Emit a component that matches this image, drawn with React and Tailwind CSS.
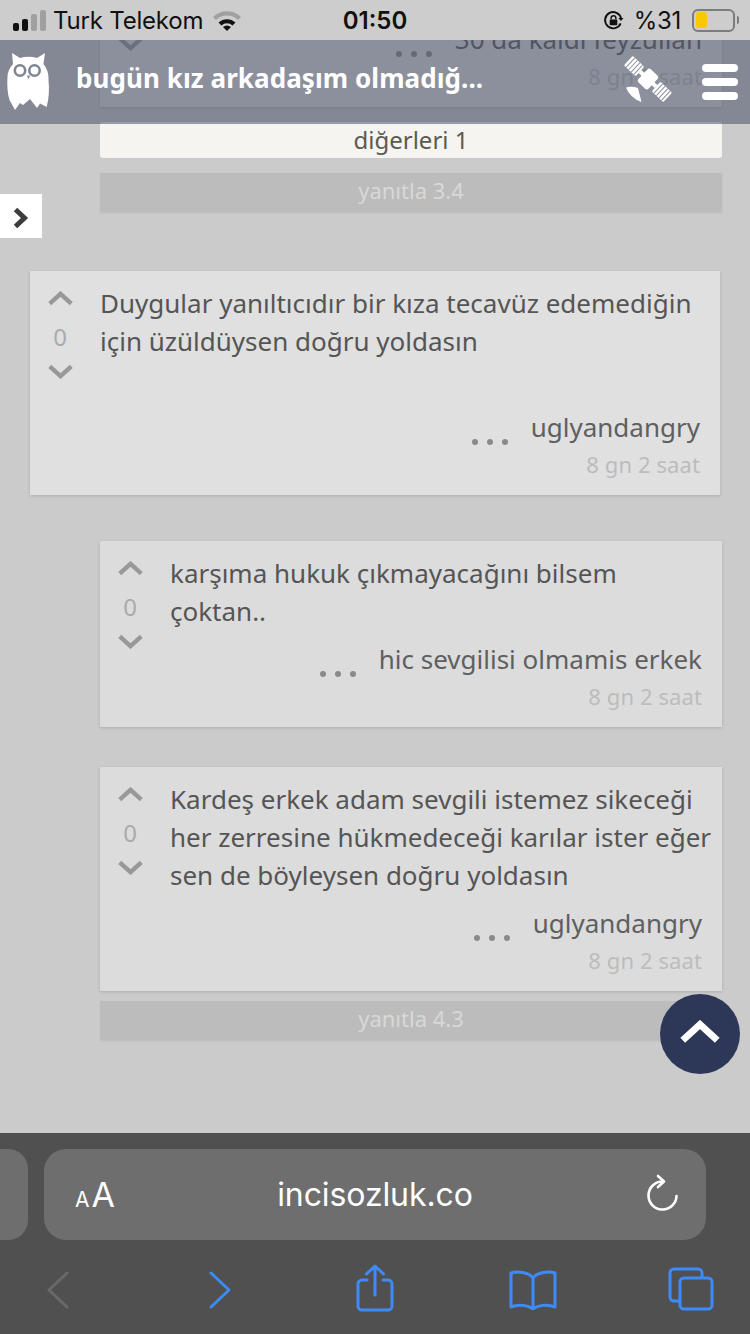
import React from 'react';

const sans = "font-['Noto_Sans','Open_Sans',sans-serif]";

const Chevron = ({ down, className }) => (
  <svg viewBox="0 0 28 16" className={className} fill="none" stroke="currentColor" strokeWidth="4.6">
    <path d={down ? 'M2.5 2.5 14 13 25.5 2.5' : 'M2.5 13.5 14 3 25.5 13.5'} />
  </svg>
);

const Votes = () => (
  <div className="flex w-[60px] shrink-0 flex-col items-center pt-[20px] text-[#989898]">
    <Chevron className="h-[15px] w-[27px]" />
    <span className="mt-[14px] h-[34px] text-[24px] leading-[34px] text-[#ababab]">0</span>
    <Chevron down className="mt-[10px] h-[15px] w-[27px]" />
  </div>
);

const Dots = () => (
  <div className="mr-[23px] mt-[31px] flex gap-[9px]">
    <span className="h-[6px] w-[6px] rounded-full bg-[#8a8a8a]" />
    <span className="h-[6px] w-[6px] rounded-full bg-[#8a8a8a]" />
    <span className="h-[6px] w-[6px] rounded-full bg-[#8a8a8a]" />
  </div>
);

const Byline = ({ author, gap }) => (
  <>
    <div className={`flex justify-end ${gap}`}>
      <Dots />
      <span className="text-[26px] leading-[38px] text-[#5f5f5f]">{author}</span>
    </div>
    <div className="-mt-[1px] text-right text-[22px] leading-[38px] tracking-[0.1px] text-[#bcbcbc]">8 gn 2 saat</div>
  </>
);

const Entry = ({ lines, author, gap = 'mt-[10px]', className }) => (
  <div className={`flex pb-[12px] pr-[20px] shadow-[0_1px_3px_rgba(0,0,0,0.15)] ${className}`}>
    <Votes />
    <div className="min-w-0 flex-1 pl-[10px] pt-[13px]">
      <div className="whitespace-nowrap text-[26px] leading-[38px] text-[#555]">
        {lines.map((line) => (
          <div key={line}>{line}</div>
        ))}
      </div>
      <Byline author={author} gap={gap} />
    </div>
  </div>
);

const ReplyBar = ({ label, className }) => (
  <div className={`ml-[100px] h-[39px] w-[622px] bg-[#bcbcbc] text-center text-[22px] leading-[35px] text-[#d8d8d8] shadow-[0_1px_2px_rgba(0,0,0,0.08)] ${className}`}>
    {label}
  </div>
);

const StatusBar = () => (
  <div className="relative z-20 flex h-[40px] shrink-0 items-center bg-[#cdcdcd] font-['Inter',sans-serif] text-[24px] text-[#111]">
    <div className="ml-[13px] flex items-end gap-[3px]">
      <span className="h-[8px] w-[6px] rounded-[2px] bg-[#111]" />
      <span className="h-[12px] w-[6px] rounded-[2px] bg-[#111]" />
      <span className="h-[17px] w-[6px] rounded-[2px] bg-[#a0a0a0]" />
      <span className="h-[21px] w-[6px] rounded-[2px] bg-[#a0a0a0]" />
    </div>
    <span className="ml-[7px] mt-[2px] text-[24px] tracking-[-0.2px]">Turk Telekom</span>
    <svg viewBox="0 0 30 22" className="ml-[9px] h-[22px] w-[30px]">
      <path d="M1 8a20 20 0 0 1 28 0l-3 3a16 16 0 0 0-22 0z" fill="#a0a0a0" />
      <path d="M6.500 13.500a12.500 12.500 0 0 1 17 0l-3 3a8 8 0 0 0-11 0z" fill="#111" />
      <path d="M11 18a6 6 0 0 1 8 0l-4 4z" fill="#111" />
    </svg>
    <span className="absolute left-0 right-0 mt-[2px] text-center font-semibold">01:50</span>
    <div className="ml-auto mr-[15px] flex items-center">
      <svg viewBox="0 0 22 22" className="h-[21px] w-[21px]" fill="none" stroke="#111" strokeWidth="2">
        <path d="M18.500 14A8.500 8.500 0 1 1 19 9" />
        <path d="M16 8.500h5.500l-2.700 3z" fill="#111" stroke="none" />
        <rect x="7" y="10" width="8" height="6" rx="1" fill="#111" stroke="none" />
        <path d="M8.500 10V8.500a2.500 2.500 0 0 1 5 0V10" strokeWidth="1.500" />
      </svg>
      <span className="ml-[10px] mt-[2px] text-[24px] tracking-[-0.3px]">%31</span>
      <div className="relative ml-[11px] flex h-[23px] w-[43px] items-center rounded-[6px] border-2 border-[#7c7c7c] px-[2px]">
        <span className="h-[16px] w-[11px] rounded-[3px] bg-[#f9c900]" />
        <span className="absolute -right-[6px] h-[8px] w-[2px] rounded-r bg-[#7c7c7c]" />
      </div>
    </div>
  </div>
);

const Owl = () => (
  <svg viewBox="0 0 60 72" className="absolute left-0 top-[4px] h-[72px] w-[60px]">
    <path
      d="M12 9 20 14Q29 11.500 37 14L45 9 43.500 20Q49 27 48.500 36 50 50 46.700 63L40 59.500 37 64 30 55 23 61 20 59 15 66 9.500 56Q6.500 46 7.500 33 7.500 26 13 20z"
      fill="#fff"
    />
    <circle cx="20" cy="26.500" r="5.200" fill="#fff" stroke="#7f8595" strokeWidth="2.600" />
    <circle cx="34.500" cy="26.500" r="5.200" fill="#fff" stroke="#7f8595" strokeWidth="2.600" />
    <path d="M27 31.500h3l-1.500 4z" fill="#7f8595" />
  </svg>
);

const Satellite = () => (
  <svg viewBox="0 0 60 60" className="absolute left-[618px] top-[10px] h-[60px] w-[60px]">
    <g transform="rotate(43 30 29)">
      <rect x="3" y="22.500" width="16" height="13" rx="1.500" fill="#fff" />
      <rect x="41" y="22.500" width="16" height="13" rx="1.500" fill="#fff" />
      <path d="M6 22.500v13M9.500 22.500v13M13 22.500v13M16.500 22.500v13M44 22.500v13M47.500 22.500v13M51 22.500v13M54.500 22.500v13" stroke="#8d929e" strokeWidth="1" />
      <rect x="19" y="27" width="22" height="4" fill="#fff" />
      <rect x="23" y="20" width="14" height="18" rx="2.500" fill="#fff" />
    </g>
    <path d="M8 37.500Q14 36 20 38L23.500 52Q12 48 8 37.500z" fill="#fff" />
  </svg>
);

const Header = () => (
  <div className={`absolute left-0 right-0 top-[40px] z-10 flex h-[84px] items-center bg-[rgba(70,78,102,0.53)] ${sans}`}>
    <Owl />
    <span className="ml-[76px] mt-[-7px] text-[26px] font-bold tracking-[0.07px] text-white">bugün kız arkadaşım olmadığ...</span>
    <Satellite />
    <div className="absolute left-[702px] top-[24px] flex flex-col gap-[6px]">
      <span className="h-[8px] w-[36px] rounded-full bg-white" />
      <span className="h-[8px] w-[36px] rounded-full bg-white" />
      <span className="h-[8px] w-[36px] rounded-full bg-white" />
    </div>
  </div>
);

const Toolbar = () => (
  <div className="flex h-[201px] shrink-0 flex-col bg-[#505050] pt-[16px]">
    <div className="flex h-[91px] gap-[16px]">
      <div className="ml-[-40px] w-[68px] rounded-[20px] bg-[#6e6e6e]" />
      <div className="relative flex w-[662px] items-center justify-center rounded-[22px] bg-[#6e6e6e] font-['Inter',sans-serif] text-white">
        <span className="absolute left-[31px] top-[29px] flex items-baseline gap-[2px] leading-[34px]">
          <span className="text-[21px]">A</span>
          <span className="text-[34px]">A</span>
        </span>
        <span className="text-[32px] tracking-[-0.1px]">incisozluk.co</span>
        <svg viewBox="0 0 34 38" className="absolute right-[27px] top-[25px] h-[38px] w-[34px]" fill="none" stroke="#fff" strokeWidth="2.600" strokeLinecap="round" strokeLinejoin="round">
          <path d="M18 7.500A14 14 0 1 0 31.500 22" />
          <path d="M13 2l6 5.500-6 5.500" />
        </svg>
      </div>
    </div>
    <div className="relative flex-1">
      <svg viewBox="0 0 24 38" className="absolute left-[46px] top-[31px] h-[38px] w-[24px]" fill="none" stroke="#696969" strokeWidth="3" strokeLinecap="round" strokeLinejoin="round">
        <path d="M21 2 3 19l18 17" />
      </svg>
      <svg viewBox="0 0 24 38" className="absolute left-[208px] top-[31px] h-[38px] w-[24px]" fill="none" stroke="#3d8bf8" strokeWidth="3" strokeLinecap="round" strokeLinejoin="round">
        <path d="M3 2l18 17L3 36" />
      </svg>
      <svg viewBox="0 0 38 48" className="absolute left-[356px] top-[24px] h-[48px] w-[38px]" fill="none" stroke="#3d8bf8" strokeWidth="3" strokeLinecap="round" strokeLinejoin="round">
        <path d="M11 16H6a4 4 0 0 0-4 4v22a4 4 0 0 0 4 4h26a4 4 0 0 0 4-4V20a4 4 0 0 0-4-4h-5" />
        <path d="M19 31V2M10.500 10 19 2l8.500 8" />
      </svg>
      <svg viewBox="0 0 48 40" className="absolute left-[509px] top-[30px] h-[40px] w-[48px]" fill="none" stroke="#3d8bf8" strokeWidth="3" strokeLinecap="round" strokeLinejoin="round">
        <path d="M24 8C20 2 8 1 2 3v34c7-3 17-2 22 2 5-4 15-5 22-2V3c-6-2-18-1-22 5zM24 8v31" />
      </svg>
      <svg viewBox="0 0 46 44" className="absolute left-[668px] top-[27px] h-[44px] w-[46px]" fill="none" stroke="#3d8bf8" strokeWidth="3" strokeLinejoin="round">
        <path d="M11 34H6a4 4 0 0 1-4-4V6a4 4 0 0 1 4-4h24a4 4 0 0 1 4 4v5" />
        <rect x="12" y="11" width="32" height="31" rx="4" />
      </svg>
    </div>
  </div>
);

export default function App() {
  return (
    <div className={`relative flex h-[1334px] w-[750px] flex-col overflow-hidden bg-[#cbcbcb] ${sans}`}>
      <StatusBar />
      <Header />

      <div className="relative min-h-0 flex-1 overflow-hidden">
        <div className="-mt-[97px] ml-[100px] flex h-[164px] w-[622px] bg-[#dcdcdc] pr-[20px] shadow-[0_1px_3px_rgba(0,0,0,0.15)]">
          <Votes />
          <div className="flex-1 pl-[10px] pt-[77px]">
            <Byline author="30 da kaldı feyzullan" />
          </div>
        </div>

        <div className="ml-[100px] mt-[15px] h-[36px] w-[622px] rounded-[3px] bg-[#f5f4f0] text-center text-[24px] leading-[35px] text-[#5a5a52]">
          diğerleri 1
        </div>
        <ReplyBar label="yanıtla 3.4" className="mt-[15px]" />

        <Entry
          className="ml-[30px] mt-[59px] w-[690px] bg-[#e0e0e0]"
          gap="mt-[48px]"
          lines={['Duygular yanıltıcıdır bir kıza tecavüz edemediğin', 'için üzüldüysen doğru yoldasın']}
          author="uglyandangry"
        />
        <Entry
          className="ml-[100px] mt-[46px] w-[622px] bg-[#dcdcdc]"
          lines={['karşıma hukuk çıkmayacağını bilsem', 'çoktan..']}
          author="hic sevgilisi olmamis erkek"
        />
        <Entry
          className="ml-[100px] mt-[40px] w-[622px] bg-[#dcdcdc]"
          lines={[
            'Kardeş erkek adam sevgili istemez sikeceği',
            'her zerresine hükmedeceği karılar ister eğer',
            'sen de böyleysen doğru yoldasın',
          ]}
          author="uglyandangry"
        />
        <ReplyBar label="yanıtla 4.3" className="mt-[10px]" />

        <div className="absolute left-0 top-[154px] flex h-[44px] w-[42px] items-center justify-center bg-white text-[#3c3c3c]">
          <svg viewBox="0 0 16 22" className="mt-[4px] h-[22px] w-[16px]" fill="none" stroke="currentColor" strokeWidth="5">
            <path d="M2.500 2.500 11.500 11l-9 8.500" />
          </svg>
        </div>
        <div className="absolute left-[660px] top-[954px] flex h-[80px] w-[80px] items-center justify-center rounded-full bg-[#2d3859] text-white">
          <Chevron className="mb-[4px] h-[24px] w-[42px]" />
        </div>
      </div>

      <Toolbar />
    </div>
  );
}
